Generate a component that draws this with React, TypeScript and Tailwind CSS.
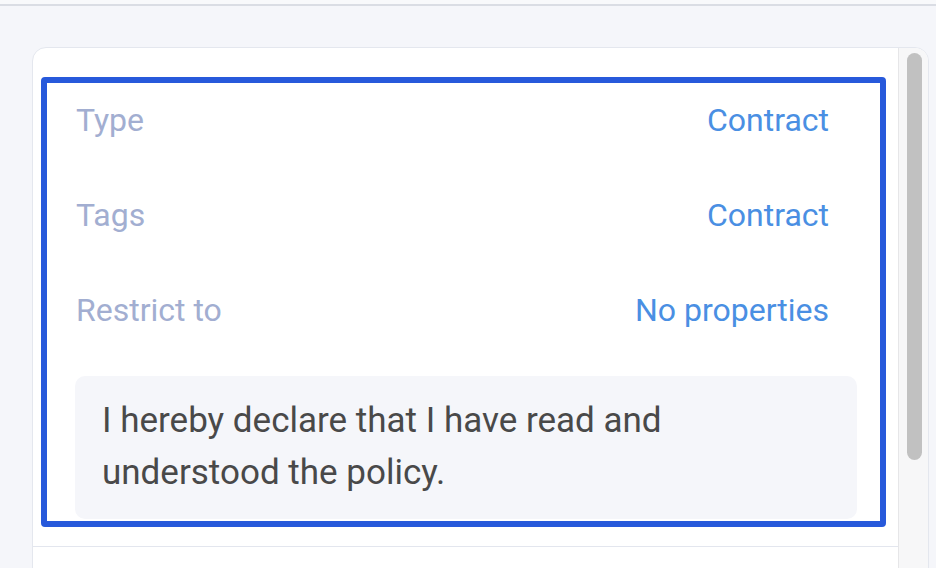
import React from "react";

const rows = [
  { label: "Type", value: "Contract" },
  { label: "Tags", value: "Contract" },
  { label: "Restrict to", value: "No properties" },
];

export default function App() {
  return (
    <div
      className="h-[568px] w-[936px] overflow-hidden bg-[#f5f6fa] flex flex-col"
      style={{ fontFamily: "Roboto, 'Noto Sans', Arial, sans-serif" }}
    >
      <div className="h-[4px] shrink-0 bg-[#f8f9fb]" />
      <div className="h-[2px] shrink-0 bg-[#dadde4]" />

      <div className="flex-1 pt-[41px] pl-[32px] pr-[7px]">
        <div className="h-[600px] flex bg-white border border-[#e4e7ee] rounded-t-[14px] overflow-hidden">
          {/* content */}
          <div className="flex-1 flex flex-col">
            <div className="mt-[29px] ml-[8px] mr-[12px] h-[450px] shrink-0 border-[6px] border-[#2759db] rounded-[4px] overflow-hidden flex flex-col">
              <div className="pt-[17px] pl-[29px] pr-[51px] flex flex-col gap-[55px]">
                {rows.map((r) => (
                  <div key={r.label} className="h-[40px] flex items-center justify-between text-[32px] leading-[40px]">
                    <span className="text-[#a2aed1]">{r.label}</span>
                    <span className="text-[#4a8fe3]">{r.value}</span>
                  </div>
                ))}
              </div>
              <div className="mt-[46px] ml-[28px] mr-[23px] shrink-0 bg-[#f5f6fa] rounded-[10px] pt-[19px] pb-[20px] pl-[27px] pr-[27px] text-[35px] leading-[52px] text-[#494949]">
                I hereby declare that I have read and understood the policy.
              </div>
            </div>
            <div className="mt-[19px] h-px shrink-0 bg-[#e3e6ee]" />
          </div>

          {/* scrollbar */}
          <div className="w-[30px] shrink-0 bg-[#f7f7f8] border-l border-[#e6e6e8] pt-[5px] pl-[8px]">
            <div className="w-[15px] h-[407px] rounded-full bg-[#c1c1c1]" />
          </div>
        </div>
      </div>
    </div>
  );
}
